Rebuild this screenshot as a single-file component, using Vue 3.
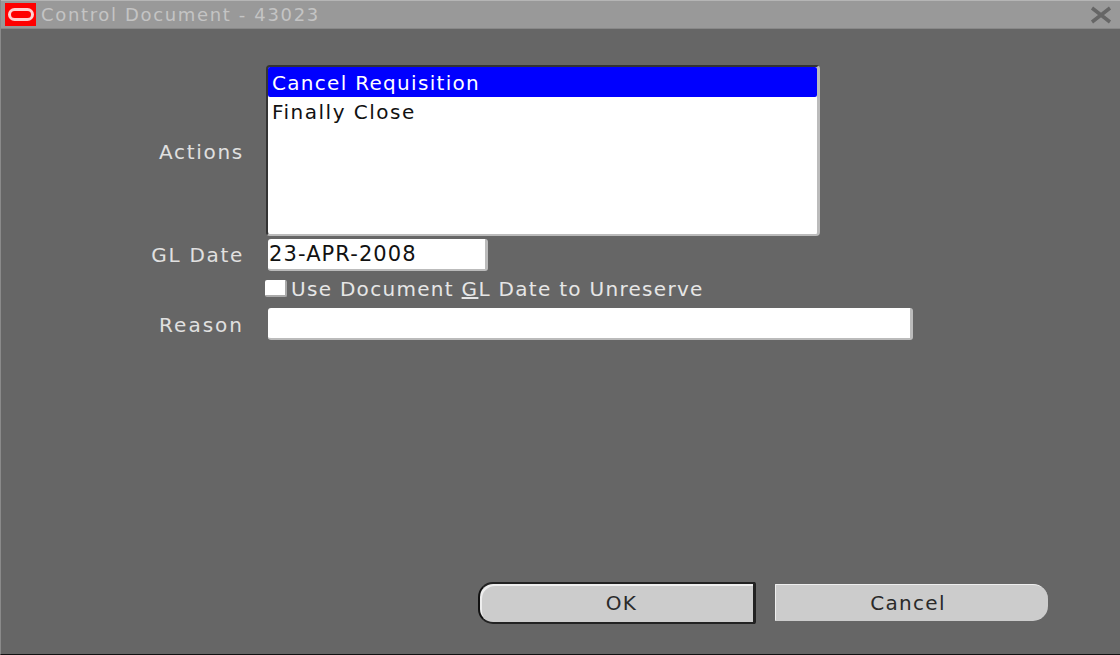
<script setup>
let actions = ['Cancel Requisition', 'Finally Close']
</script>

<template>
  <div class="window">
    <header class="titlebar">
      <div class="logo">
        <svg width="28" height="15" viewBox="0 0 28 15">
          <rect x="2.5" y="2.5" width="23" height="10" rx="5" fill="none" stroke="#ffd0d0" stroke-width="3" />
        </svg>
      </div>
      <span class="title">Control Document - 43023</span>
      <svg class="close" width="22" height="18" viewBox="0 0 22 18">
        <path d="M2 2 L20 16 M20 2 L2 16" stroke="#666" stroke-width="3.5" fill="none" />
      </svg>
    </header>

    <main class="body">
      <div class="form">
        <label class="label actions-label">Actions</label>
        <div class="listbox">
          <div v-for="(a, i) in actions" :key="a" class="option" :class="{ selected: i === 0 }">{{ a }}</div>
        </div>

        <label class="label">GL Date</label>
        <div class="field date">23-APR-2008</div>

        <span></span>
        <div class="check-row">
          <span class="checkbox"></span>
          <span>Use Document <u>G</u>L Date to Unreserve</span>
        </div>

        <label class="label reason-label">Reason</label>
        <div class="field reason"></div>
      </div>

      <footer class="buttons">
        <button class="btn ok">OK</button>
        <button class="btn cancel">Cancel</button>
      </footer>
    </main>
  </div>
</template>

<style>
html, body {
  margin: 0;
  background: #666;
}
</style>

<style scoped>
* {
  box-sizing: border-box;
  font-family: "DejaVu Sans", "Liberation Sans", sans-serif;
}

.window {
  width: 1120px;
  height: 655px;
  display: flex;
  flex-direction: column;
  background: #666;
  border-bottom: 1px solid #111;
  border-left: 1px solid #8a8a8a;
  overflow: hidden;
}

.titlebar {
  height: 29px;
  flex: none;
  display: flex;
  align-items: center;
  background: #999;
  border-top: 1px solid #b5b5b5;
  border-bottom: 1px solid #888;
  padding: 0 8px 0 4px;
}

.logo {
  width: 31px;
  height: 23px;
  background: #f00;
  display: flex;
  align-items: center;
  justify-content: center;
}

.title {
  margin-left: 5px;
  color: #c4c4c4;
  font-size: 18px;
  letter-spacing: 1.65px;
}

.close {
  margin-left: auto;
}

.body {
  flex: 1;
  display: flex;
  flex-direction: column;
  padding: 36px 0 30px;
}

.form {
  display: grid;
  grid-template-columns: 243px auto;
  column-gap: 22px;
  row-gap: 3px;
  justify-content: start;
  align-items: center;
  color: #e6e6e6;
  font-size: 20px;
  letter-spacing: 1.3px;
}

.label {
  text-align: right;
  color: #e0e0e0;
  letter-spacing: 1.7px;
}

.actions-label {
  padding-top: 3px;
}

.reason-label {
  padding-top: 2px;
  letter-spacing: 2px;
}

.listbox {
  width: 554px;
  height: 171px;
  background: #fff;
  border: 2px solid #333;
  border-right: 3px solid #bbb;
  border-bottom-color: #bbb;
  border-radius: 4px;
  color: #111;
}

.option {
  height: 30px;
  line-height: 32px;
  padding-left: 4px;
  letter-spacing: 1.5px;
}

.option + .option {
  height: 29px;
  line-height: 30px;
}

.selected {
  background: #00f;
  color: #fff;
  border-radius: 2px;
  letter-spacing: 1.3px;
}

.field {
  height: 32px;
  margin-left: 2px;
  line-height: 30px;
  padding-left: 1px;
  background: #fff;
  color: #111;
  border-right: 3px solid #bbb;
  border-bottom: 2px solid #bbb;
  border-radius: 3px;
  font-size: 21px;
  letter-spacing: 1.1px;
}

.date {
  width: 220px;
}

.reason {
  width: 645px;
}

.check-row {
  height: 31px;
  margin-left: -1px;
  display: flex;
  align-items: center;
  gap: 4px;
}

.check-row span:last-child {
  margin-top: -2px;
}

.checkbox {
  width: 22px;
  height: 17px;
  margin-top: -3px;
  background: #fff;
  border-right: 2px solid #aaa;
  border-bottom: 2px solid #aaa;
  border-radius: 2px;
}

.buttons {
  margin-top: auto;
  display: flex;
  align-items: center;
  padding-left: 477px;
  gap: 19px;
}

.btn {
  background: #ccc;
  color: #2a2a2a;
  font-size: 20px;
  letter-spacing: 1.3px;
  padding: 0;
}

.ok {
  width: 278px;
  height: 42px;
  padding-left: 10px;
  border: 2px solid #222;
  border-left-color: #111;
  border-right-width: 3px;
  border-radius: 15px 2px 2px 15px;
  box-shadow: inset 2px 2px 0 #eee;
}

.cancel {
  width: 273px;
  height: 37px;
  margin-bottom: 2px;
  padding-right: 8px;
  border: none;
  border-top: 1px solid #eee;
  border-left: 1px solid #eee;
  border-radius: 1px 15px 15px 1px;
}
</style>
